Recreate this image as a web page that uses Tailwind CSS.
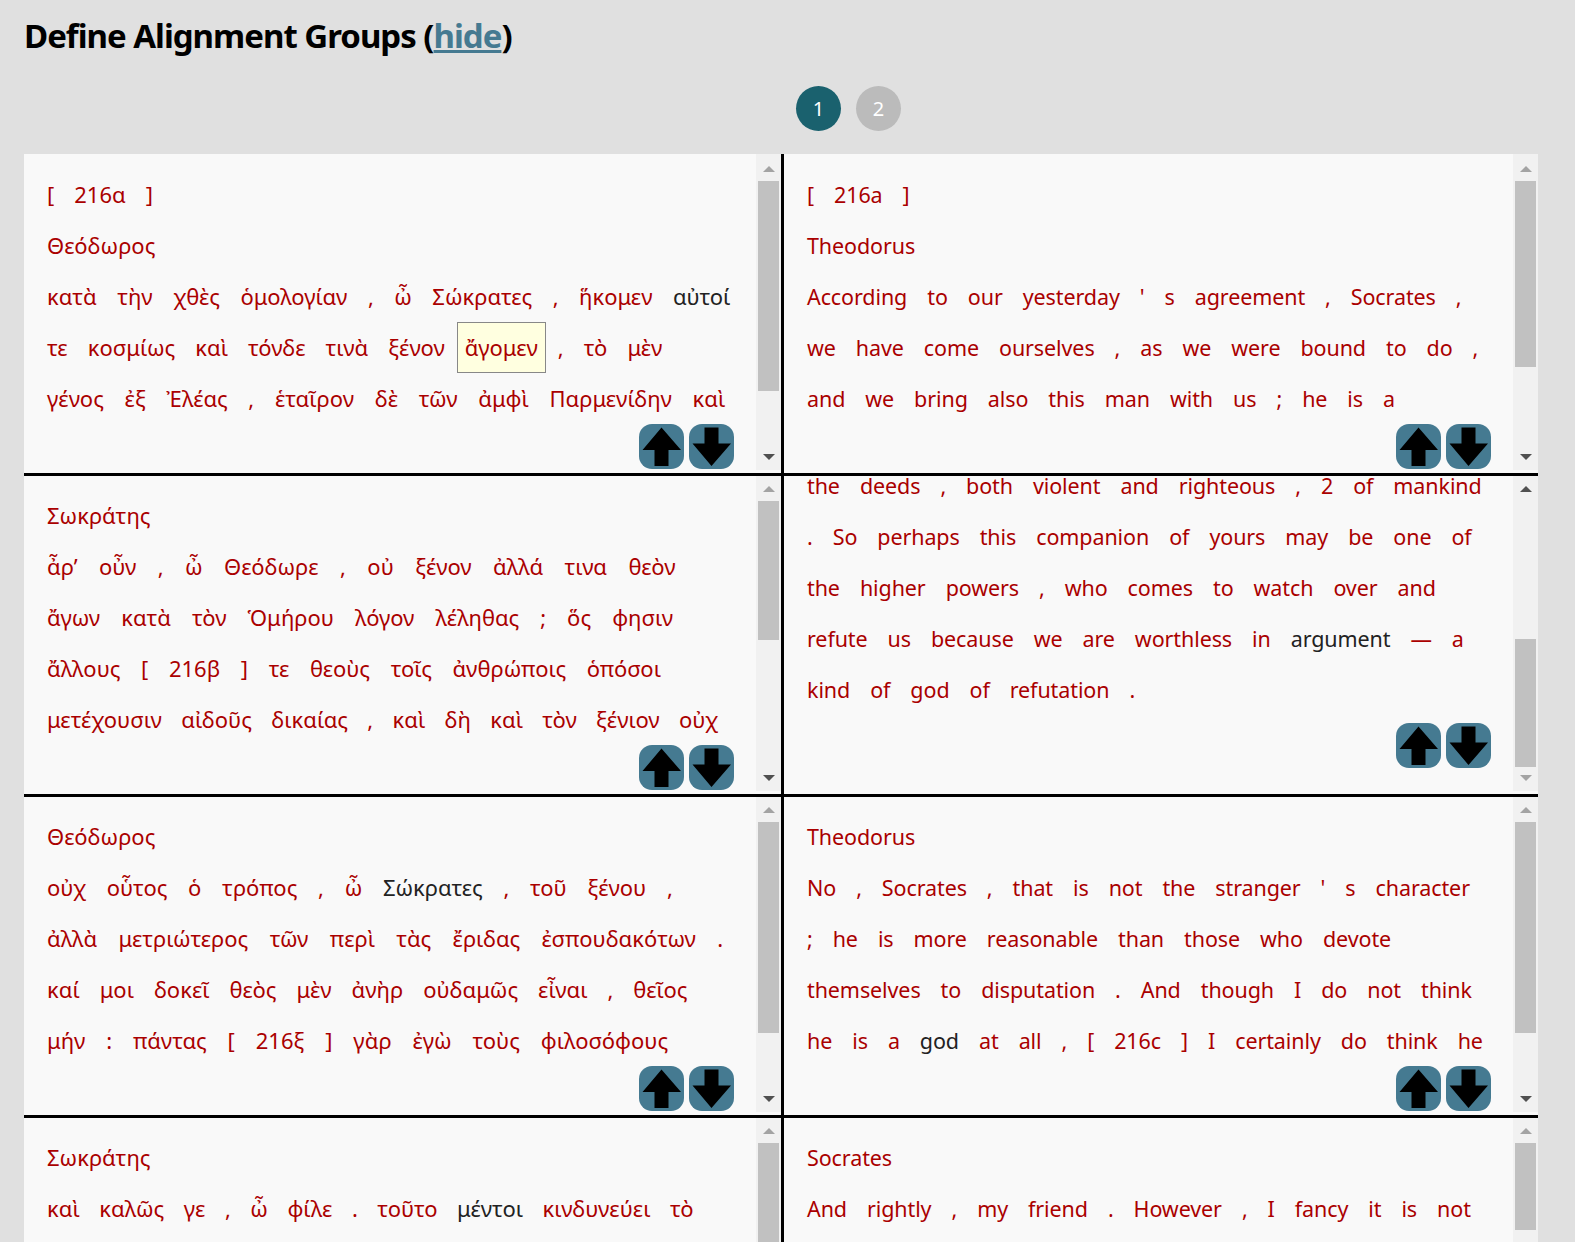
<!DOCTYPE html>
<html lang="en">
<head>
<meta charset="UTF-8">
<title>Define Alignment Groups</title>
<script src="https://cdn.jsdelivr.net/npm/@tailwindcss/browser@4"></script>
</head>
<body class="bg-[#e0e0e0] h-[1242px] overflow-hidden font-['Noto_Sans',sans-serif] text-[#aa0000]">

<h1 class="pl-[24px] pt-[12px] h-[86px] text-[33px] leading-[48px] font-bold text-black tracking-[-1px]">Define Alignment Groups (<a href="#" class="text-[#457a91] underline decoration-[3px]">hide</a>)</h1>

<div class="flex justify-center gap-[15px] h-[46px] pl-[122px]">
  <div class="w-[45px] h-[45px] rounded-full bg-[#1a616e] text-white text-[20px] flex items-center justify-center">1</div>
  <div class="w-[45px] h-[45px] rounded-full bg-[#bbbbbb] text-white text-[20px] flex items-center justify-center">2</div>
</div>

<div class="mt-[22px] ml-[24px] w-[1514px] grid grid-cols-[760px_754px] bg-[#f9f9f9]">

  <!-- row 1 -->
  <div class="relative h-[322px] border-b-[3px] border-r-[3px] border-black flex overflow-hidden">
    <div class="flex-1 pl-[23px] pt-[15px] text-[22px] flex flex-col *:flex *:gap-[20px] *:items-center *:h-[51px] *:whitespace-nowrap">
      <div><span>[</span><span>216α</span><span>]</span></div>
      <div><span>Θεόδωρος</span></div>
      <div class="gap-[20.5px]!"><span>κατὰ</span><span>τὴν</span><span>χθὲς</span><span>ὁμολογίαν</span><span>,</span><span>ὦ</span><span>Σώκρατες</span><span>,</span><span>ἥκομεν</span><span class="text-[#222222]">αὐτοί</span></div>
      <div><span>τε</span><span>κοσμίως</span><span>καὶ</span><span>τόνδε</span><span>τινὰ</span><span>ξένον</span><span class="-mx-[8px] px-[7px] h-[51px] leading-[49px] border border-[#888888] bg-[#ffffe0]">ἄγομεν</span><span>,</span><span>τὸ</span><span>μὲν</span></div>
      <div class="gap-[20.7px]!"><span>γένος</span><span>ἐξ</span><span>Ἐλέας</span><span>,</span><span>ἑταῖρον</span><span>δὲ</span><span>τῶν</span><span>ἀμφὶ</span><span>Παρμενίδην</span><span>καὶ</span></div>
    </div>
    <div class="absolute right-[47px] bottom-[4px] flex gap-[5px]">
      <div class="w-[45px] h-[45px] rounded-[13px] bg-[#457a91]"><svg viewBox="0 0 45 45" class="w-full h-full"><path d="M22.5 3.5 42 26H29.500V42H15.500V26H3.500Z"/></svg></div>
      <div class="w-[45px] h-[45px] rounded-[13px] bg-[#457a91]"><svg viewBox="0 0 45 45" class="w-full h-full"><path d="M15.500 3.500H29.500V19.500H42L22.500 42 3.500 19.500H15.500Z"/></svg></div>
    </div>
    <div class="w-[25px] h-[316px] bg-[#f1f1f1] flex flex-col items-center">
      <div class="mt-[12px] border-x-[6px] border-x-transparent border-b-[6px] border-b-[#a3a3a3]"></div>
      <div class="mt-[9px] w-[21px] h-[210px] bg-[#c1c1c1]"></div>
      <div class="mt-auto mb-[10px] border-x-[6px] border-x-transparent border-t-[6px] border-t-[#505050]"></div>
    </div>
  </div>
  <div class="relative h-[322px] border-b-[3px] border-black flex overflow-hidden">
    <div class="flex-1 pl-[23px] pt-[16px] text-[21.5px] tracking-[-0.1px] flex flex-col *:flex *:gap-[20px] *:items-center *:h-[51px] *:whitespace-nowrap">
      <div><span>[</span><span>216a</span><span>]</span></div>
      <div><span>Theodorus</span></div>
      <div><span>According</span><span>to</span><span>our</span><span>yesterday</span><span>'</span><span>s</span><span>agreement</span><span>,</span><span>Socrates</span><span>,</span></div>
      <div><span>we</span><span>have</span><span>come</span><span>ourselves</span><span>,</span><span>as</span><span>we</span><span>were</span><span>bound</span><span>to</span><span>do</span><span>,</span></div>
      <div><span>and</span><span>we</span><span>bring</span><span>also</span><span>this</span><span>man</span><span>with</span><span>us</span><span>;</span><span>he</span><span>is</span><span>a</span></div>
    </div>
    <div class="absolute right-[47px] bottom-[4px] flex gap-[5px]">
      <div class="w-[45px] h-[45px] rounded-[13px] bg-[#457a91]"><svg viewBox="0 0 45 45" class="w-full h-full"><path d="M22.5 3.5 42 26H29.500V42H15.500V26H3.500Z"/></svg></div>
      <div class="w-[45px] h-[45px] rounded-[13px] bg-[#457a91]"><svg viewBox="0 0 45 45" class="w-full h-full"><path d="M15.500 3.500H29.500V19.500H42L22.500 42 3.500 19.500H15.500Z"/></svg></div>
    </div>
    <div class="w-[25px] h-[316px] bg-[#f1f1f1] flex flex-col items-center">
      <div class="mt-[12px] border-x-[6px] border-x-transparent border-b-[6px] border-b-[#a3a3a3]"></div>
      <div class="mt-[9px] w-[21px] h-[186px] bg-[#c1c1c1]"></div>
      <div class="mt-auto mb-[10px] border-x-[6px] border-x-transparent border-t-[6px] border-t-[#505050]"></div>
    </div>
  </div>

  <!-- row 2 -->
  <div class="relative h-[321px] border-b-[3px] border-r-[3px] border-black flex overflow-hidden">
    <div class="flex-1 pl-[23px] pt-[14px] text-[22px] flex flex-col *:flex *:gap-[20px] *:items-center *:h-[51px] *:whitespace-nowrap">
      <div><span>Σωκράτης</span></div>
      <div class="gap-[21.4px]!"><span>ἆρ’</span><span>οὖν</span><span>,</span><span>ὦ</span><span>Θεόδωρε</span><span>,</span><span>οὐ</span><span>ξένον</span><span>ἀλλά</span><span>τινα</span><span>θεὸν</span></div>
      <div class="gap-[21px]!"><span>ἄγων</span><span>κατὰ</span><span>τὸν</span><span>Ὁμήρου</span><span>λόγον</span><span>λέληθας</span><span>;</span><span>ὅς</span><span>φησιν</span></div>
      <div class="gap-[20.6px]!"><span>ἄλλους</span><span>[</span><span>216β</span><span>]</span><span>τε</span><span>θεοὺς</span><span>τοῖς</span><span>ἀνθρώποις</span><span>ὁπόσοι</span></div>
      <div class="gap-[19.3px]!"><span>μετέχουσιν</span><span>αἰδοῦς</span><span>δικαίας</span><span>,</span><span>καὶ</span><span>δὴ</span><span>καὶ</span><span>τὸν</span><span>ξένιον</span><span>οὐχ</span></div>
    </div>
    <div class="absolute right-[47px] bottom-[4px] flex gap-[5px]">
      <div class="w-[45px] h-[45px] rounded-[13px] bg-[#457a91]"><svg viewBox="0 0 45 45" class="w-full h-full"><path d="M22.5 3.5 42 26H29.500V42H15.500V26H3.500Z"/></svg></div>
      <div class="w-[45px] h-[45px] rounded-[13px] bg-[#457a91]"><svg viewBox="0 0 45 45" class="w-full h-full"><path d="M15.500 3.500H29.500V19.500H42L22.500 42 3.500 19.500H15.500Z"/></svg></div>
    </div>
    <div class="w-[25px] h-[315px] bg-[#f1f1f1] flex flex-col items-center">
      <div class="mt-[10px] border-x-[6px] border-x-transparent border-b-[6px] border-b-[#a3a3a3]"></div>
      <div class="mt-[9px] w-[21px] h-[139px] bg-[#c1c1c1]"></div>
      <div class="mt-auto mb-[10px] border-x-[6px] border-x-transparent border-t-[6px] border-t-[#505050]"></div>
    </div>
  </div>
  <div class="relative h-[321px] border-b-[3px] border-black flex overflow-hidden">
    <div class="flex-1 pl-[23px] -mt-[15px] text-[21.5px] tracking-[-0.1px] flex flex-col *:flex *:gap-[20px] *:items-center *:h-[51px] *:whitespace-nowrap">
      <div><span>the</span><span>deeds</span><span>,</span><span>both</span><span>violent</span><span>and</span><span>righteous</span><span>,</span><span>2</span><span>of</span><span>mankind</span></div>
      <div><span>.</span><span>So</span><span>perhaps</span><span>this</span><span>companion</span><span>of</span><span>yours</span><span>may</span><span>be</span><span>one</span><span>of</span></div>
      <div><span>the</span><span>higher</span><span>powers</span><span>,</span><span>who</span><span>comes</span><span>to</span><span>watch</span><span>over</span><span>and</span></div>
      <div><span>refute</span><span>us</span><span>because</span><span>we</span><span>are</span><span>worthless</span><span>in</span><span class="text-[#222222]">argument</span><span>—</span><span>a</span></div>
      <div><span>kind</span><span>of</span><span>god</span><span>of</span><span>refutation</span><span>.</span></div>
    </div>
    <div class="absolute right-[47px] bottom-[26px] flex gap-[5px]">
      <div class="w-[45px] h-[45px] rounded-[13px] bg-[#457a91]"><svg viewBox="0 0 45 45" class="w-full h-full"><path d="M22.5 3.5 42 26H29.500V42H15.500V26H3.500Z"/></svg></div>
      <div class="w-[45px] h-[45px] rounded-[13px] bg-[#457a91]"><svg viewBox="0 0 45 45" class="w-full h-full"><path d="M15.500 3.500H29.500V19.500H42L22.500 42 3.500 19.500H15.500Z"/></svg></div>
    </div>
    <div class="w-[25px] h-[315px] bg-[#f1f1f1] flex flex-col items-center">
      <div class="mt-[10px] border-x-[6px] border-x-transparent border-b-[6px] border-b-[#505050]"></div>
      <div class="mt-auto w-[21px] h-[128px] bg-[#c1c1c1]"></div>
      <div class="mt-[8px] mb-[10px] border-x-[6px] border-x-transparent border-t-[6px] border-t-[#a3a3a3]"></div>
    </div>
  </div>

  <!-- row 3 -->
  <div class="relative h-[321px] border-b-[3px] border-r-[3px] border-black flex overflow-hidden">
    <div class="flex-1 pl-[23px] pt-[14px] text-[22px] flex flex-col *:flex *:gap-[20px] *:items-center *:h-[51px] *:whitespace-nowrap">
      <div><span>Θεόδωρος</span></div>
      <div class="gap-[20.7px]!"><span>οὐχ</span><span>οὗτος</span><span>ὁ</span><span>τρόπος</span><span>,</span><span>ὦ</span><span class="text-[#222222]">Σώκρατες</span><span>,</span><span>τοῦ</span><span>ξένου</span><span>,</span></div>
      <div class="gap-[21.3px]!"><span>ἀλλὰ</span><span>μετριώτερος</span><span>τῶν</span><span>περὶ</span><span>τὰς</span><span>ἔριδας</span><span>ἐσπουδακότων</span><span>.</span></div>
      <div><span>καί</span><span>μοι</span><span>δοκεῖ</span><span>θεὸς</span><span>μὲν</span><span>ἀνὴρ</span><span>οὐδαμῶς</span><span>εἶναι</span><span>,</span><span>θεῖος</span></div>
      <div class="gap-[20.9px]!"><span>μήν</span><span>:</span><span>πάντας</span><span>[</span><span>216ξ</span><span>]</span><span>γὰρ</span><span>ἐγὼ</span><span>τοὺς</span><span>φιλοσόφους</span></div>
    </div>
    <div class="absolute right-[47px] bottom-[4px] flex gap-[5px]">
      <div class="w-[45px] h-[45px] rounded-[13px] bg-[#457a91]"><svg viewBox="0 0 45 45" class="w-full h-full"><path d="M22.5 3.5 42 26H29.500V42H15.500V26H3.500Z"/></svg></div>
      <div class="w-[45px] h-[45px] rounded-[13px] bg-[#457a91]"><svg viewBox="0 0 45 45" class="w-full h-full"><path d="M15.500 3.500H29.500V19.500H42L22.500 42 3.500 19.500H15.500Z"/></svg></div>
    </div>
    <div class="w-[25px] h-[315px] bg-[#f1f1f1] flex flex-col items-center">
      <div class="mt-[10px] border-x-[6px] border-x-transparent border-b-[6px] border-b-[#a3a3a3]"></div>
      <div class="mt-[9px] w-[21px] h-[211px] bg-[#c1c1c1]"></div>
      <div class="mt-auto mb-[10px] border-x-[6px] border-x-transparent border-t-[6px] border-t-[#505050]"></div>
    </div>
  </div>
  <div class="relative h-[321px] border-b-[3px] border-black flex overflow-hidden">
    <div class="flex-1 pl-[23px] pt-[15px] text-[21.5px] tracking-[-0.1px] flex flex-col *:flex *:gap-[20px] *:items-center *:h-[51px] *:whitespace-nowrap">
      <div><span>Theodorus</span></div>
      <div><span>No</span><span>,</span><span>Socrates</span><span>,</span><span>that</span><span>is</span><span>not</span><span>the</span><span>stranger</span><span>'</span><span>s</span><span>character</span></div>
      <div><span>;</span><span>he</span><span>is</span><span>more</span><span>reasonable</span><span>than</span><span>those</span><span>who</span><span>devote</span></div>
      <div><span>themselves</span><span>to</span><span>disputation</span><span>.</span><span>And</span><span>though</span><span>I</span><span>do</span><span>not</span><span>think</span></div>
      <div><span>he</span><span>is</span><span>a</span><span class="text-[#222222]">god</span><span>at</span><span>all</span><span>,</span><span>[</span><span>216c</span><span>]</span><span>I</span><span>certainly</span><span>do</span><span>think</span><span>he</span></div>
    </div>
    <div class="absolute right-[47px] bottom-[4px] flex gap-[5px]">
      <div class="w-[45px] h-[45px] rounded-[13px] bg-[#457a91]"><svg viewBox="0 0 45 45" class="w-full h-full"><path d="M22.5 3.5 42 26H29.500V42H15.500V26H3.500Z"/></svg></div>
      <div class="w-[45px] h-[45px] rounded-[13px] bg-[#457a91]"><svg viewBox="0 0 45 45" class="w-full h-full"><path d="M15.500 3.500H29.500V19.500H42L22.500 42 3.500 19.500H15.500Z"/></svg></div>
    </div>
    <div class="w-[25px] h-[315px] bg-[#f1f1f1] flex flex-col items-center">
      <div class="mt-[10px] border-x-[6px] border-x-transparent border-b-[6px] border-b-[#a3a3a3]"></div>
      <div class="mt-[9px] w-[21px] h-[211px] bg-[#c1c1c1]"></div>
      <div class="mt-auto mb-[10px] border-x-[6px] border-x-transparent border-t-[6px] border-t-[#505050]"></div>
    </div>
  </div>

  <!-- row 4, cut off by the window -->
  <div class="relative h-[124px] border-r-[3px] border-black flex overflow-hidden">
    <div class="flex-1 pl-[23px] pt-[14px] text-[22px] flex flex-col *:flex *:gap-[20px] *:items-center *:h-[51px] *:whitespace-nowrap">
      <div><span>Σωκράτης</span></div>
      <div class="gap-[19.5px]!"><span>καὶ</span><span>καλῶς</span><span>γε</span><span>,</span><span>ὦ</span><span>φίλε</span><span>.</span><span>τοῦτο</span><span class="text-[#222222]">μέντοι</span><span>κινδυνεύει</span><span>τὸ</span></div>
    </div>
    <div class="w-[25px] bg-[#f1f1f1] flex flex-col items-center">
      <div class="mt-[10px] border-x-[6px] border-x-transparent border-b-[6px] border-b-[#a3a3a3]"></div>
      <div class="mt-[9px] w-[21px] flex-1 bg-[#c1c1c1]"></div>
    </div>
  </div>
  <div class="relative h-[124px] flex overflow-hidden">
    <div class="flex-1 pl-[23px] pt-[15px] text-[21.5px] tracking-[-0.1px] flex flex-col *:flex *:gap-[20px] *:items-center *:h-[51px] *:whitespace-nowrap">
      <div><span>Socrates</span></div>
      <div><span>And</span><span>rightly</span><span>,</span><span>my</span><span>friend</span><span>.</span><span>However</span><span>,</span><span>I</span><span>fancy</span><span>it</span><span>is</span><span>not</span></div>
    </div>
    <div class="w-[25px] bg-[#f1f1f1] flex flex-col items-center">
      <div class="mt-[10px] border-x-[6px] border-x-transparent border-b-[6px] border-b-[#a3a3a3]"></div>
      <div class="mt-[9px] w-[21px] h-[87px] bg-[#c1c1c1]"></div>
    </div>
  </div>
</div>

</body>
</html>
